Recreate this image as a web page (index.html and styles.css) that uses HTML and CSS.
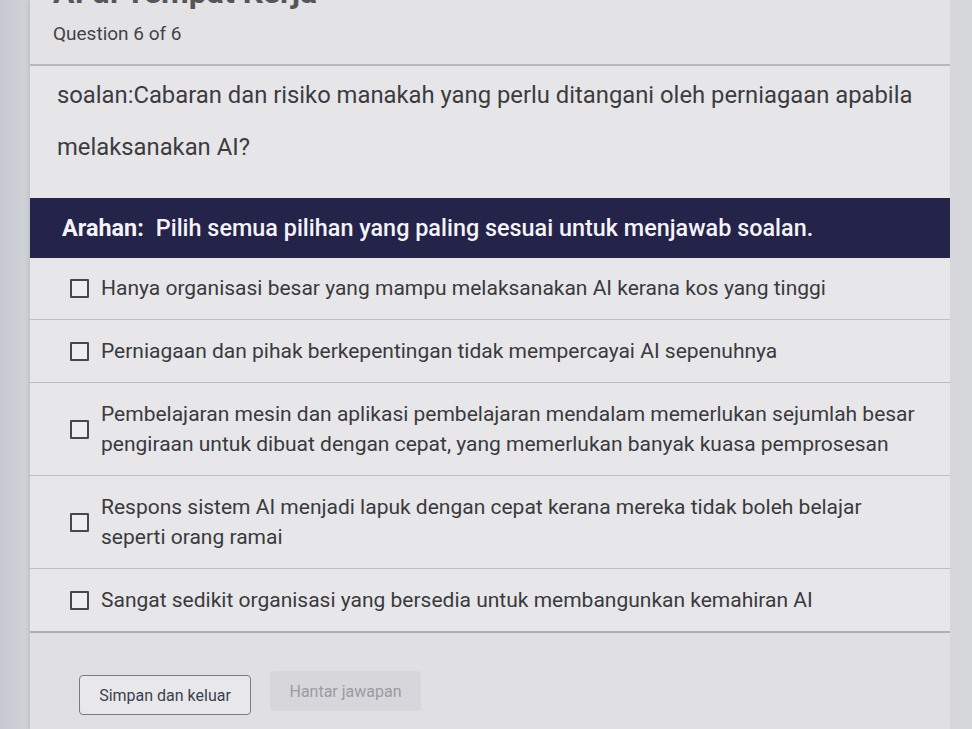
FILE: index.html
```html
<!DOCTYPE html>
<html lang="ms">
<head>
<meta charset="utf-8">
<title>AI di Tempat Kerja - Question 6 of 6</title>
<link rel="stylesheet" href="styles.css">
</head>
<body>
<div class="screen">
  <main class="panel">
    <header class="head">
      <h1 class="title">AI di Tempat Kerja</h1>
      <div class="qnum">Question 6 of 6</div>
    </header>
    <section class="question">
      <p>soalan:Cabaran dan risiko manakah yang perlu ditangani oleh perniagaan apabila melaksanakan AI?</p>
    </section>
    <div class="instr"><span class="lbl">Arahan:</span>Pilih semua pilihan yang paling sesuai untuk menjawab soalan.</div>
    <ul class="options">
      <li class="opt"><span class="box"></span><span class="txt">Hanya organisasi besar yang mampu melaksanakan AI kerana kos yang tinggi</span></li>
      <li class="opt"><span class="box"></span><span class="txt">Perniagaan dan pihak berkepentingan tidak mempercayai AI sepenuhnya</span></li>
      <li class="opt"><span class="box"></span><span class="txt">Pembelajaran mesin dan aplikasi pembelajaran mendalam memerlukan sejumlah besar pengiraan untuk dibuat dengan cepat, yang memerlukan banyak kuasa pemprosesan</span></li>
      <li class="opt"><span class="box"></span><span class="txt">Respons sistem AI menjadi lapuk dengan cepat kerana mereka tidak boleh belajar seperti orang ramai</span></li>
      <li class="opt"><span class="box"></span><span class="txt">Sangat sedikit organisasi yang bersedia untuk membangunkan kemahiran AI</span></li>
    </ul>
    <div class="actions">
      <button class="btn btn-save" type="button">Simpan dan keluar</button>
      <button class="btn btn-send" type="button" disabled>Hantar jawapan</button>
    </div>
  </main>
</div>
</body>
</html>
```
FILE: styles.css
```css
html, body {
  margin: 0;
  padding: 0;
  height: 100%;
}
body {
  background: #d3d5d9;
  font-family: Roboto, "Liberation Sans", Arial, sans-serif;
  color: #3a3a3c;
  overflow: hidden;
}
.screen {
  display: flex;
  height: 729px;
  background: linear-gradient(90deg, #c6c9cf 0, #cfd2d7 30px, #d6d7db 100%);
}
.panel {
  margin-left: 30px;
  width: 920px;
  display: flex;
  flex-direction: column;
  background: #e2e2e5;
  box-shadow: -2px 0 3px rgba(0,0,0,0.08);
}
.head {
  height: 64px;
  padding-left: 23px;
  background: #e3e3e6;
  border-bottom: 2px solid #b8b8bc;
  overflow: hidden;
}
.title {
  margin: -25px 0 0;
  font-size: 32px;
  line-height: 34px;
  font-weight: 700;
  color: #56565a;
}
.qnum {
  margin-top: 13px;
  font-size: 19px;
  line-height: 24px;
  color: #444448;
}
.question {
  padding: 3px 30px 25px 27px;
  background: #e6e6e9;
}
.question p {
  margin: 0;
  font-size: 23.8px;
  line-height: 52px;
  color: #3c3c3f;
}
.instr {
  height: 60px;
  display: flex;
  align-items: center;
  padding-left: 32px;
  background: #24234a;
  color: #f4f4f8;
  font-size: 23.4px;
  font-weight: 500;
}
.instr .lbl {
  font-weight: 700;
  margin-right: 12px;
}
.options {
  list-style: none;
  margin: 0;
  padding: 0;
  background: #e7e7ea;
  border-bottom: 2px solid #aeaeb3;
}
.opt {
  display: flex;
  align-items: center;
  gap: 12px;
  padding: 16px 20px 16px 40px;
  border-top: 1px solid #bdbdc1;
}
.opt:first-child {
  border-top: none;
  padding-top: 15px;
}
.box {
  flex: none;
  width: 15px;
  height: 15px;
  border: 2px solid #48484c;
  border-radius: 1px;
  background: #eeeef0;
}
.txt {
  font-size: 21px;
  line-height: 30px;
  color: #3a3a3d;
}
.actions {
  flex: 1;
  display: flex;
  align-items: flex-start;
  gap: 19px;
  padding: 42px 0 0 49px;
  background: #e0e0e3;
}
.btn {
  font-family: Roboto, "Liberation Sans", Arial, sans-serif;
  font-size: 16px;
  height: 40px;
  border-radius: 4px;
}
.btn-save {
  width: 172px;
  background: #e8e8eb;
  border: 1px solid #7a7a80;
  color: #394150;
}
.btn-send {
  width: 151px;
  margin-top: -4px;
  background: #d6d6db;
  border: none;
  color: #9b9ba2;
}
```
